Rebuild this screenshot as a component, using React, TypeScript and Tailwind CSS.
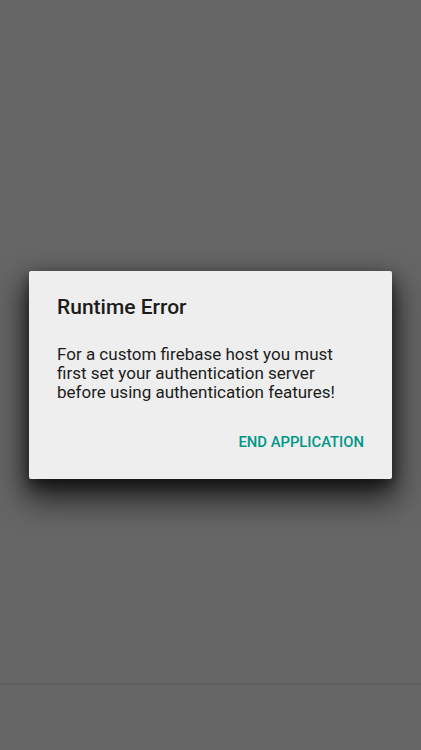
export default function App() {
  return (
    <div
      className="relative h-[750px] w-[421px] bg-[#666666] flex flex-col"
      style={{ fontFamily: 'Roboto, "Noto Sans", sans-serif' }}
    >
      <div className="flex-1" />
      <div className="h-[67px] border-t-2 border-[#5e5e5e]" />

      {/* runtime error dialog */}
      <div className="absolute inset-0 flex items-center justify-center">
        <div className="w-[363px] h-[208px] bg-[#eeeeee] rounded-[2px] shadow-[0_16px_32px_4px_rgba(0,0,0,0.7),0_6px_14px_rgba(0,0,0,0.5)] flex flex-col px-[28px]">
          <h2 className="pt-[23px] text-[21px] leading-[26px] font-medium text-[#1c1c1c]">
            Runtime Error
          </h2>
          <p className="mt-[25px] pr-[12px] text-[17px] leading-[19px] text-[#1c1c1c]">
            For a custom firebase host you must first set your authentication server before using authentication features!
          </p>
          <div className="mt-auto mb-[26px] flex justify-end">
            <button className="text-[14.8px] font-medium text-[#009688]">
              END APPLICATION
            </button>
          </div>
        </div>
      </div>
    </div>
  );
}
